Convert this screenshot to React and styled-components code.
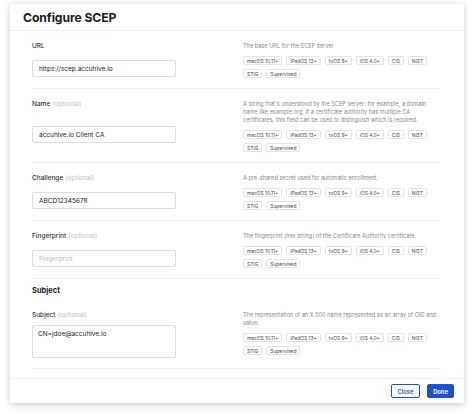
import React from "react";
import styled, { createGlobalStyle } from "styled-components";

const GlobalStyle = createGlobalStyle`
  html, body {
    margin: 0;
    padding: 0;
    background: #ffffff;
  }
  body {
    font-family: Inter, "Noto Sans", "Liberation Sans", sans-serif;
    -webkit-font-smoothing: antialiased;
  }
`;

const Page = styled.div`
  width: 474px;
  height: 420px;
  padding: 4px 10px 0 10px;
  box-sizing: border-box;
`;

const Modal = styled.div`
  width: 454px;
  height: 399px;
  background: #fff;
  border-radius: 2px;
  box-shadow: 0 1px 6px rgba(0, 0, 0, 0.16), 0 4px 10px rgba(0, 0, 0, 0.06);
  display: flex;
  flex-direction: column;
  overflow: hidden;
`;

const Header = styled.div`
  height: 26px;
  border-bottom: 1px solid #efefef;
  display: flex;
  align-items: center;
  padding-left: 13px;
  font-size: 12.2px;
  font-weight: 700;
  color: #1c1c1c;
  letter-spacing: -0.1px;
`;

const Body = styled.div`
  flex: 1;
  padding: 0 24px 0 22px;
`;

const Section = styled.div`
  display: grid;
  grid-template-columns: 211px 1fr;
  padding: 11px 0 10px 0;
  border-bottom: 1px solid #efefef;
`;

const SectionTitle = styled.div`
  padding: 7px 0 4px 0;
  font-size: 7.5px;
  line-height: 10px;
  font-weight: 700;
  color: #1c1c1c;
`;

const Field = styled.div`
  display: flex;
  flex-direction: column;
`;

const Label = styled.div`
  font-size: 6.5px;
  line-height: 9px;
  font-weight: 500;
  color: #333;
`;

const Optional = styled.span`
  color: #c4c4c4;
  font-weight: 400;
  margin-left: 2px;
`;

const Input = styled.input`
  margin-top: ${(p) => p.$gap}px;
  width: 144px;
  height: 17px;
  box-sizing: border-box;
  border: 1px solid #dedede;
  border-radius: 2px;
  padding: 0 6px;
  font-family: inherit;
  font-size: 6.5px;
  color: #222;
  outline: none;
  &::placeholder {
    color: #bdbdbd;
  }
`;

const TextArea = styled.textarea`
  margin-top: ${(p) => p.$gap}px;
  width: 144px;
  height: 33px;
  box-sizing: border-box;
  border: 1px solid #dedede;
  border-radius: 2px;
  padding: 4px 5px;
  font-family: inherit;
  font-size: 6.5px;
  line-height: 8px;
  color: #222;
  resize: none;
  outline: none;
`;

const Info = styled.div`
  display: flex;
  flex-direction: column;
`;

const Description = styled.div`
  font-size: 5.6px;
  line-height: 8px;
  color: #8a8a8a;
  max-width: ${(p) => p.$width || 197}px;
`;

const Tags = styled.div`
  margin-top: 6px;
  display: flex;
  flex-wrap: wrap;
  gap: 4px 4px;
  width: 194px;
`;

const Tag = styled.span`
  height: 9px;
  line-height: 8px;
  box-sizing: border-box;
  border: 1px solid #e4e4e4;
  border-radius: 1.5px;
  padding: 0 3px;
  font-size: 4.9px;
  color: #4a4a4a;
  white-space: nowrap;
`;

const Footer = styled.div`
  border-top: 1px solid #f2f2f2;
  padding: 5px 10px 5px 0;
  display: flex;
  justify-content: flex-end;
  gap: 7px;
`;

const Button = styled.button`
  height: 14px;
  width: ${(p) => p.$width}px;
  box-sizing: border-box;
  border-radius: 2px;
  font-family: inherit;
  font-size: 5.8px;
  font-weight: 600;
  padding: 0;
  cursor: pointer;
  border: 1px solid #2452c8;
  background: ${(p) => (p.$primary ? "#2050c6" : "#fff")};
  color: ${(p) => (p.$primary ? "#fff" : "#2452c8")};
`;

const platforms = ["macOS 10.11+", "iPadOS 13+", "tvOS 9+", "iOS 4.0+", "CIS", "NIST", "STIG", "Supervised"];

const fields = [
  {
    label: "URL",
    value: "https://scep.accuhive.io",
    gap: 9,
    description: "The base URL for the SCEP server",
  },
  {
    label: "Name",
    optional: true,
    value: "accuhive.io Client CA",
    gap: 17,
    descWidth: 190,
    description:
      "A string that's understood by the SCEP server; for example, a domain name like example.org. If a certificate authority has multiple CA certificates, this field can be used to distinguish which is required.",
  },
  {
    label: "Challenge",
    optional: true,
    value: "ABCD12345678",
    gap: 9,
    description: "A pre-shared secret used for automatic enrollment.",
  },
  {
    label: "Fingerprint",
    optional: true,
    placeholder: "Fingerprint",
    gap: 9,
    description: "The fingerprint (hex string) of the Certificate Authority certificate.",
  },
];

const PlatformTags = () => (
  <Tags>
    {platforms.map((p) => (
      <Tag key={p}>{p}</Tag>
    ))}
  </Tags>
);

const FieldLabel = ({ label, optional }) => (
  <Label>
    {label}
    {optional && <Optional>(optional)</Optional>}
  </Label>
);

export default function App() {
  return (
    <>
      <GlobalStyle />
      <Page>
        <Modal>
          <Header>Configure SCEP</Header>
          <Body>
            {fields.map((f) => (
              <Section key={f.label}>
                <Field>
                  <FieldLabel label={f.label} optional={f.optional} />
                  <Input
                    $gap={f.gap}
                    defaultValue={f.value}
                    placeholder={f.placeholder}
                  />
                </Field>
                <Info>
                  <Description $width={f.descWidth}>{f.description}</Description>
                  <PlatformTags />
                </Info>
              </Section>
            ))}
            <SectionTitle>Subject</SectionTitle>
            <Section>
              <Field>
                <FieldLabel label="Subject" optional />
                <TextArea $gap={5} defaultValue="CN=jdoe@accuhive.io" />
              </Field>
              <Info>
                <Description>
                  The representation of an X.500 name represented as an array of OID and value.
                </Description>
                <PlatformTags />
              </Info>
            </Section>
          </Body>
          <Footer>
            <Button $width={29}>Close</Button>
            <Button $width={27} $primary>
              Done
            </Button>
          </Footer>
        </Modal>
      </Page>
    </>
  );
}
